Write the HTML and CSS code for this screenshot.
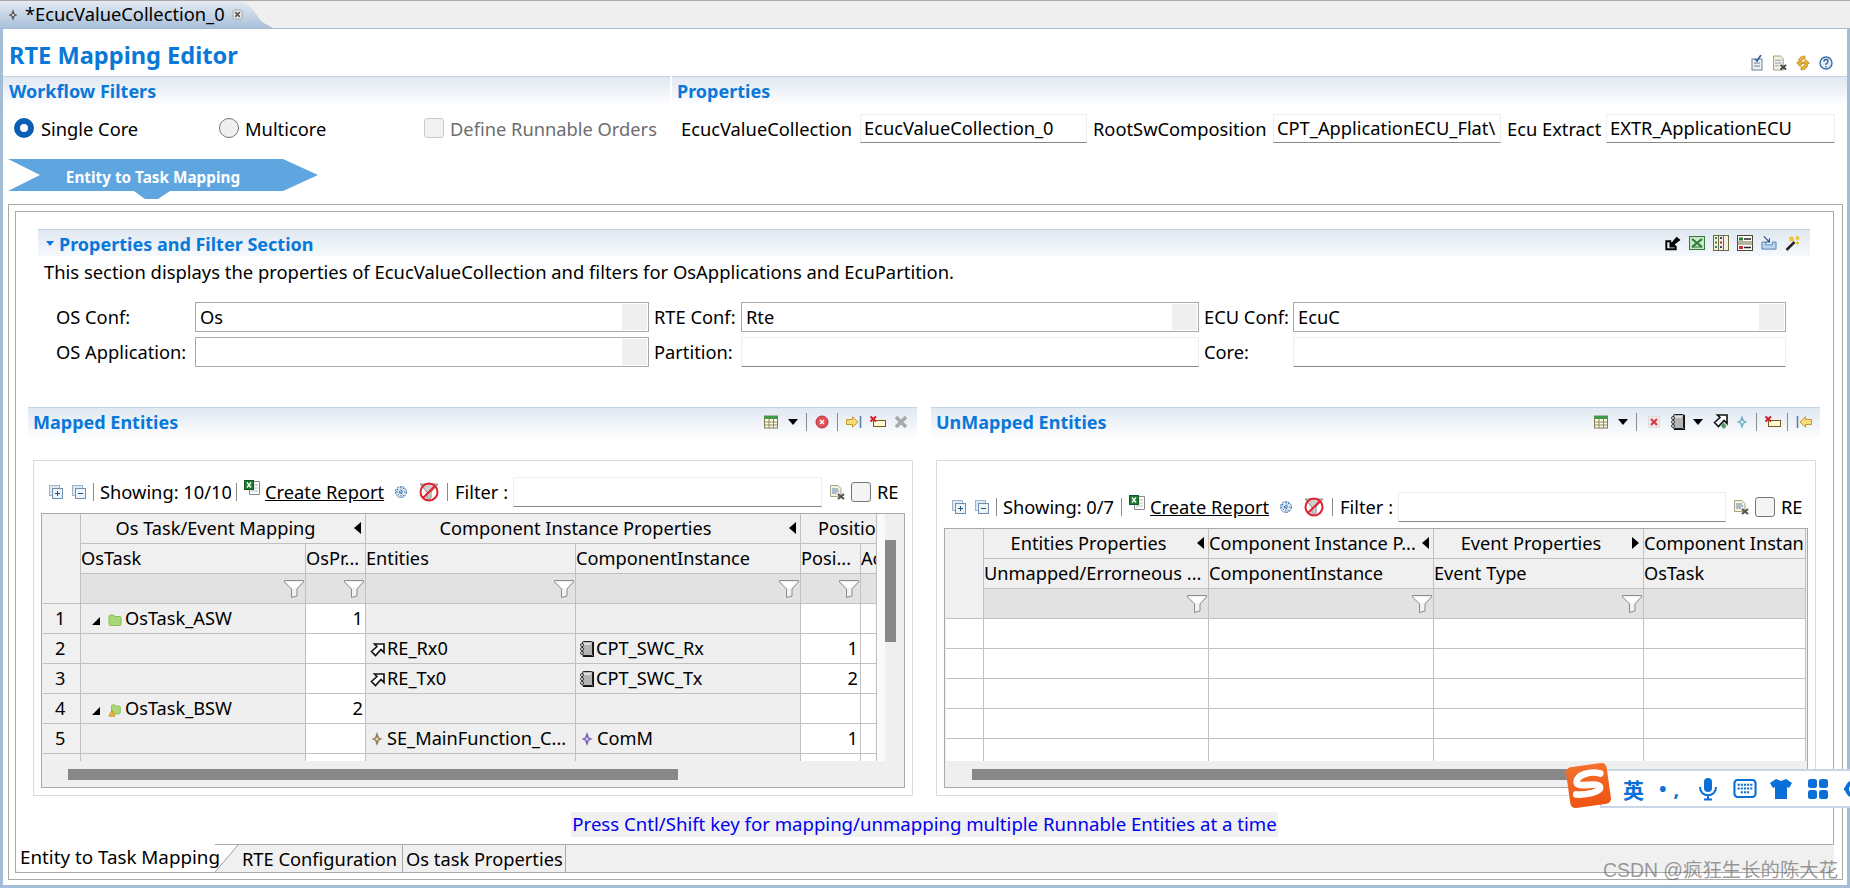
FILE: index.html
```html
<!DOCTYPE html>
<html lang="en">
<head>
<meta charset="utf-8">
<title>RTE Mapping Editor</title>
<link rel="stylesheet" href="styles.css">
</head>
<body>
<svg class="defs" width="0" height="0" aria-hidden="true">
  <defs>
    <symbol id="i-funnel" viewBox="0 0 20 18"><path d="M.5.5H19.500V2L13 9V16L7.500 17.500V9L.5 2Z" fill="#f2f2f2" stroke="#8a8a8a"/><path d="M3 2.500H17L12 8H8Z" fill="#fff"/></symbol>
    <symbol id="i-grid" viewBox="0 0 14 13"><rect x=".5" y=".5" width="13" height="12" fill="#fffbe8" stroke="#7d7d50"/><rect x=".5" y=".5" width="13" height="3" fill="#3f9a45"/><path d="M.5 6.500H13.500M.5 9.500H13.500M5 3.500V12.500M9.500 3.500V12.500" stroke="#8a8a60"/></symbol>
    <symbol id="i-plus" viewBox="0 0 14 14"><rect x=".5" y=".5" width="10" height="10" fill="#dfe9f3" stroke="#9db5cc"/><rect x="3.500" y="3.500" width="10" height="10" fill="#eef3f8" stroke="#6f8fb0"/><path d="M6 8.500H11M8.500 6V11" stroke="#24507c"/></symbol>
    <symbol id="i-minus" viewBox="0 0 14 14"><rect x=".5" y=".5" width="10" height="10" fill="#dfe9f3" stroke="#9db5cc"/><rect x="3.500" y="3.500" width="10" height="10" fill="#eef3f8" stroke="#6f8fb0"/><path d="M6 8.500H11" stroke="#24507c"/></symbol>
    <symbol id="i-excel" viewBox="0 0 16 16"><path d="M5.500 1.500H15.500V14.500H5.500Z" fill="#fff" stroke="#8a8a8a"/><path d="M7 5H14M7 8H14M7 11H14" stroke="#b8b8b8"/><rect x=".5" y=".5" width="9" height="9" fill="#1f7a32" stroke="#0f5a20"/><path d="M3 2.500L7 7.500M7 2.500L3 7.500" stroke="#fff" stroke-width="1.300"/></symbol>
    <symbol id="i-globe" viewBox="0 0 12 12"><circle cx="6" cy="6" r="5.500" fill="#dbe7f3" stroke="#3b74ad" stroke-dasharray="2 1"/><path d="M2 3L9 10M9 2L3 9M1 6H11M6 1V11" stroke="#2f6aa5" stroke-dasharray="1.500 1.200"/></symbol>
    <symbol id="i-nofilter" viewBox="0 0 20 20"><path d="M1 2H19L12 10V16L8 18V10Z" fill="#cfcfcf" stroke="#8a8a8a"/><circle cx="10" cy="10" r="8.500" fill="none" stroke="#e2202c" stroke-width="2"/><path d="M4 16L16 4" stroke="#e2202c" stroke-width="2"/></symbol>
    <symbol id="i-clear" viewBox="0 0 15 15"><path d="M.5.5H8L11 3.500V11.500H.5Z" fill="#f6f2dc" stroke="#a9a283"/><path d="M2 4H8M2 6H9M2 8H7" stroke="#5e82b8"/><path d="M8 9L14 14M14 9L8 14" stroke="#555" stroke-width="2.200"/></symbol>
    <symbol id="i-folder" viewBox="0 0 14 14"><path d="M1 3.500Q1 2 2.500 2H5.500L7 3.500H12Q13 3.500 13 5V11Q13 12.500 11.500 12.500H2.500Q1 12.500 1 11Z" fill="#a8d977" stroke="#8dbb5a"/></symbol>
    <symbol id="i-folder-warn" viewBox="0 0 14 16"><path d="M3 3.500Q3 2 4.500 2H6.500L8 3.500H12Q13 3.500 13 5V11Q13 12.500 11.500 12.500H4.500Q3 12.500 3 11Z" fill="#a8d977" stroke="#8dbb5a"/><path d="M3.500 8L7 15H0Z" fill="#f2b632" stroke="#b57d10" stroke-width=".7"/></symbol>
    <symbol id="i-run" viewBox="0 0 15 14"><path d="M14 1V9.500L11 6.500L5.500 12.500L1.500 8.500L7 3.500L4.500 1Z" fill="#fff" stroke="#111" stroke-width="1.600" stroke-linejoin="miter"/></symbol>
    <symbol id="i-book" viewBox="0 0 14 16"><rect x="2.500" y=".5" width="10" height="14" rx="1" fill="#b4b4b4" stroke="#222"/><path d="M12.500 1.500H13.500V15.500H3.500V14.500" fill="none" stroke="#111" stroke-width="1.400"/><rect x="4" y="2" width="7" height="2" fill="#ddd"/><circle cx="2" cy="4" r="1.500" fill="#eee" stroke="#111" stroke-width=".8"/><circle cx="2" cy="8" r="1.500" fill="#eee" stroke="#111" stroke-width=".8"/><circle cx="2" cy="12" r="1.500" fill="#eee" stroke="#111" stroke-width=".8"/></symbol>
    <symbol id="i-star" viewBox="0 0 12 16"><path d="M6 1L8 6.500L11.500 8L8 9.500L6 15L4 9.500L.5 8L4 6.500Z" fill="currentColor"/><circle cx="6" cy="8" r="1.600" fill="#fff" fill-opacity=".7"/></symbol>
    <symbol id="i-tag" viewBox="0 0 16 12"><rect x="3.500" y="4.500" width="12" height="6" fill="#fff8d8" stroke="#7a5a12"/><path d="M.5 .5L6 5.500M6 .5L.5 5.500" stroke="#d2202c" stroke-width="2"/></symbol>
    <symbol id="i-next" viewBox="0 0 16 12"><path d="M.5 3.500H6.500V.8L12 6L6.500 11.200V8.500H.5Z" fill="#f6dc7a" stroke="#c49a24"/><path d="M14.500 0V12" stroke="#5a7fb4" stroke-width="1.600"/></symbol>
    <symbol id="i-prev" viewBox="0 0 16 12"><path d="M15.500 3.500H9.500V.8L4 6L9.500 11.200V8.500H15.500Z" fill="#f6dc7a" stroke="#c49a24"/><path d="M1.500 0V12" stroke="#5a7fb4" stroke-width="1.600"/></symbol>
  </defs>
</svg>
<div class="app">
  <div class="tabbar">
    <div class="etab">
      <svg class="i10" viewBox="0 0 12 16"><use href="#i-star"/></svg>
      <span class="etab-t">*EcucValueCollection_0</span>
      <svg class="i12" viewBox="0 0 12 12"><rect x="1" y="1" width="10" height="10" rx="2" fill="#e8e8e8" stroke="#a5a5a5"/><path d="M3.500 3.500L8.500 8.500M8.500 3.500L3.500 8.500" stroke="#555" stroke-width="1.800"/></svg>
    </div>
  </div>
  <div class="editor">
    <div class="titlerow">
      <h1 class="title">RTE Mapping Editor</h1>
      <div class="title-icons">
        <svg class="ti" viewBox="0 0 12 16"><rect x="1" y="4" width="10" height="11" fill="#eef3f8" stroke="#6c7f93"/><path d="M3 8H9M3 11H9" stroke="#6c7f93"/><path d="M4 4L6 6L10 0" fill="none" stroke="#2360a8" stroke-width="1.600"/></svg>
        <svg class="ti" viewBox="0 0 15 16"><path d="M.5.5H8L11 3.500V15.500H.5Z" fill="#f4f1e2" stroke="#9c9a86"/><path d="M2 5H9M2 8H9M2 11H6" stroke="#8896ab"/><path d="M8 10L14 15M14 10L8 15" stroke="#444" stroke-width="2"/></svg>
        <svg class="ti" viewBox="0 0 14 16"><path d="M9 1C4 1 2 4 2.500 7.500L.5 7.500L4 11.500L7.500 7.500H5.500C5 5.500 6.500 4 9 4Z" fill="#e6b32e" stroke="#a87c14" stroke-width=".6"/><path d="M5 15C10 15 12 12 11.500 8.500L13.500 8.500L10 4.500L6.500 8.500H8.500C9 10.500 7.500 12 5 12Z" fill="#e6b32e" stroke="#a87c14" stroke-width=".6"/></svg>
        <svg class="ti" viewBox="0 0 14 16"><circle cx="7" cy="8" r="6" fill="#e2edf7" stroke="#3a6ea5" stroke-width="1.400"/><path d="M5 6.500Q5 4.500 7 4.500Q9 4.500 9 6.500Q9 7.800 7 8.800V10M7 11V12.500" fill="none" stroke="#2b5c94" stroke-width="1.300"/></svg>
      </div>
    </div>
    <div class="toprow">
      <section class="wf">
        <h2 class="sechead">Workflow Filters</h2>
        <div class="wf-row">
          <label class="opt opt-single"><span class="radio on"></span>Single Core</label>
          <label class="opt opt-multi"><span class="radio"></span>Multicore</label>
          <label class="opt opt-disabled"><span class="check dis"></span>Define Runnable Orders</label>
        </div>
      </section>
      <section class="props">
        <h2 class="sechead">Properties</h2>
        <div class="props-row">
          <span class="pl pl1">EcucValueCollection</span><span class="field f1">EcucValueCollection_0</span>
          <span class="pl pl2">RootSwComposition</span><span class="field f2">CPT_ApplicationECU_Flat\</span>
          <span class="pl pl3">Ecu Extract</span><span class="field f3">EXTR_ApplicationECU</span>
        </div>
      </section>
    </div>
    <div class="crumb"><span>Entity to Task Mapping</span></div>
    <div class="outer">
      <div class="inner">
        <section class="pf">
          <div class="pf-head">
            <span class="twist"></span><h2 class="pf-title">Properties and Filter Section</h2>
            <div class="pf-icons">
              <svg class="t16" viewBox="0 0 18 16"><path d="M7 6H1.500V15H12V11" fill="none" stroke="#000" stroke-width="2.200"/><path d="M5 13V5L7.500 7.500L13 1L17.500 4.500L11 9.500L13 13Z" fill="#000"/></svg>
              <svg class="t16" viewBox="0 0 16 16"><rect x=".5" y="1.500" width="15" height="13" fill="#cfe3c8" stroke="#2e7d3b"/><path d="M3 4L13 12M13 4L3 12" stroke="#1f7a32" stroke-width="2"/><path d="M3 12H13" stroke="#1f7a32"/></svg>
              <svg class="t16" viewBox="0 0 16 16"><rect x=".5" y=".5" width="15" height="15" fill="#f2efdc" stroke="#6b6b45"/><path d="M5.500 0V16M10.500 0V16" stroke="#6b6b45"/><path d="M2 3H4M2 7.500H4M2 12H4" stroke="#3b8a3f" stroke-width="2"/><path d="M7 3H9M7 12H9" stroke="#3a3a9e" stroke-width="2"/><path d="M7 7.500H9" stroke="#d2202c" stroke-width="2"/></svg>
              <svg class="t16" viewBox="0 0 16 16"><rect x=".5" y=".5" width="15" height="15" fill="#fff" stroke="#47472c"/><path d="M0 7H16M0 9H16" stroke="#6b6b45"/><rect x="2" y="2.500" width="4" height="3" fill="#2a7a30"/><rect x="2" y="11" width="4" height="3" fill="#d2302c"/><path d="M7 4H14M7 12.500H14" stroke="#222" stroke-width="1.500"/></svg>
              <svg class="t16" viewBox="0 0 17 16"><path d="M1 7V14.500H16V7H12V10H5V7Z" fill="#bcd6ef" stroke="#4b7fb5"/><path d="M3 1L9 7M9 3V7H5" fill="none" stroke="#234e86" stroke-width="1.200"/></svg>
              <svg class="t16" viewBox="0 0 15 16"><path d="M1 15L9 7" stroke="#222" stroke-width="2.500"/><circle cx="6" cy="4" r="2.500" fill="#f0c92c"/><circle cx="12" cy="3" r="2" fill="#f0c92c"/><circle cx="12" cy="8" r="1.500" fill="#e8b824"/></svg>
            </div>
          </div>
          <p class="pf-desc">This section displays the properties of EcucValueCollection and filters for OsApplications and EcuPartition.</p>
        </section>
        <div class="form">
          <span class="fl">OS Conf:</span><span class="box box-b">Os<i class="btn"></i></span>
          <span class="fl fl2">RTE Conf:</span><span class="box box-b">Rte<i class="btn"></i></span>
          <span class="fl fl2">ECU Conf:</span><span class="box box-b">EcuC<i class="btn"></i></span>
          <span class="fl">OS Application:</span><span class="box box-b"><i class="btn"></i></span>
          <span class="fl fl2">Partition:</span><span class="box box-e"></span>
          <span class="fl fl2">Core:</span><span class="box box-e"></span>
        </div>
        <div class="panels">
          <section class="pane">
            <div class="pane-head">
              <h2 class="pane-title">Mapped Entities</h2>
              <div class="pane-icons">
                <svg class="t14"><use href="#i-grid"/></svg><i class="caret"></i><i class="sep"></i>
                <svg class="t14" viewBox="0 0 14 14"><circle cx="7" cy="7" r="6" fill="#e25058" stroke="#b62f37"/><path d="M5 5L9 9M9 5L5 9" stroke="#fff" stroke-width="1.500"/></svg><i class="sep"></i>
                <svg class="t16w"><use href="#i-next"/></svg>
                <svg class="t16w"><use href="#i-tag"/></svg>
                <svg class="t14" viewBox="0 0 14 14"><path d="M2 2L12 12M12 2L2 12" stroke="#a9a9a9" stroke-width="3.600"/></svg>
              </div>
            </div>
            <div class="box-panel">
              <div class="tools">
                <svg class="t14"><use href="#i-plus"/></svg>
                <svg class="t14"><use href="#i-minus"/></svg>
                <i class="sep"></i>
                <span class="showing show-l">Showing: 10/10</span>
                <i class="sep"></i>
                <svg class="t16 up"><use href="#i-excel"/></svg>
                <a class="report">Create Report</a>
                <svg class="t12"><use href="#i-globe"/></svg>
                <svg class="t20"><use href="#i-nofilter"/></svg>
                <i class="sep"></i>
                <span class="flt">Filter :</span>
                <span class="finput fi-l"></span>
                <svg class="t15"><use href="#i-clear"/></svg>
                <span class="check"></span>
                <span class="re">RE</span>
              </div>
              <div class="grid grid-l">
                <div class="grid-main">
                  <div class="clip">
                    <table class="tbl tbl-l">
                      <colgroup><col class="c-rh"><col class="c225"><col class="c60"><col class="c210"><col class="c225"><col class="c60"><col class="c16"></colgroup>
                      <tr class="h"><th class="rh" rowspan="3"></th><th colspan="2"><div class="gh"><span>Os Task/Event Mapping</span><i class="tl"></i></div></th><th colspan="2"><div class="gh"><span>Component Instance Properties</span><i class="tl"></i></div></th><th colspan="2"><div class="gh ghclip">Position</div></th></tr>
                      <tr class="h"><th class="l">OsTask</th><th class="l">OsPr...</th><th class="l">Entities</th><th class="l">ComponentInstance</th><th class="l">Posi...</th><th class="l">Ac</th></tr>
                      <tr class="fr"><td class="fc"><svg class="fun"><use href="#i-funnel"/></svg></td><td class="fc"><svg class="fun"><use href="#i-funnel"/></svg></td><td class="fc"><svg class="fun"><use href="#i-funnel"/></svg></td><td class="fc"><svg class="fun"><use href="#i-funnel"/></svg></td><td class="fc"><svg class="fun"><use href="#i-funnel"/></svg></td><td class="fc"></td></tr>
                      <tr><th class="rh n">1</th><td class="g task"><i class="tw"></i><svg class="t14"><use href="#i-folder"/></svg>OsTask_ASW</td><td class="r">1</td><td class="g"></td><td class="g"></td><td></td><td></td></tr>
                      <tr><th class="rh n">2</th><td class="g"></td><td></td><td class="g ent"><svg class="t16w2"><use href="#i-run"/></svg>RE_Rx0</td><td class="g ent"><svg class="t15b"><use href="#i-book"/></svg>CPT_SWC_Rx</td><td class="r">1</td><td></td></tr>
                      <tr><th class="rh n">3</th><td class="g"></td><td></td><td class="g ent"><svg class="t16w2"><use href="#i-run"/></svg>RE_Tx0</td><td class="g ent"><svg class="t15b"><use href="#i-book"/></svg>CPT_SWC_Tx</td><td class="r">2</td><td></td></tr>
                      <tr><th class="rh n">4</th><td class="g task"><i class="tw"></i><svg class="t14"><use href="#i-folder-warn"/></svg>OsTask_BSW</td><td class="r">2</td><td class="g"></td><td class="g"></td><td></td><td></td></tr>
                      <tr><th class="rh n">5</th><td class="g"></td><td></td><td class="g ent"><svg class="ts brown"><use href="#i-star"/></svg>SE_MainFunction_C...</td><td class="g ent"><svg class="ts purple"><use href="#i-star"/></svg>ComM</td><td class="r">1</td><td></td></tr>
                      <tr><th class="rh"></th><td class="g"></td><td></td><td class="g"></td><td class="g"></td><td></td><td></td></tr>
                    </table>
                  </div>
                  <div class="vscroll"><i class="vthumb"></i></div>
                </div>
                <div class="hscroll"><i class="hthumb hthumb-l"></i></div>
              </div>
            </div>
          </section>
          <section class="pane pane-r">
            <div class="pane-head">
              <h2 class="pane-title">UnMapped Entities</h2>
              <div class="pane-icons">
                <svg class="t14"><use href="#i-grid"/></svg><i class="caret"></i><i class="sep"></i>
                <svg class="t12 xs" viewBox="0 0 12 12"><rect x=".5" y=".5" width="11" height="11" fill="#f3e9e9" stroke="#ddd"/><path d="M3 3L9 9M9 3L3 9" stroke="#d8384a" stroke-width="2.200"/></svg>
                <svg class="t15b"><use href="#i-book"/></svg><i class="caret"></i>
                <svg class="t16 runx" viewBox="0 0 16 16"><path d="M15 1V9.500L12 6.500L6.500 12.500L2.500 8.500L8 3.500L5.500 1Z" fill="#fff" stroke="#111" stroke-width="1.600"/><path d="M11 8L14.500 12L12 15L9 12Z" fill="#4f9a6a"/></svg>
                <svg class="t12 teal" viewBox="0 0 12 16"><use href="#i-star"/></svg><i class="sep"></i>
                <svg class="t16w"><use href="#i-tag"/></svg><i class="sep sep-t"></i>
                <svg class="t16w"><use href="#i-prev"/></svg>
              </div>
            </div>
            <div class="box-panel">
              <div class="tools">
                <svg class="t14"><use href="#i-plus"/></svg>
                <svg class="t14"><use href="#i-minus"/></svg>
                <i class="sep"></i>
                <span class="showing show-r">Showing: 0/7</span>
                <i class="sep"></i>
                <svg class="t16 up"><use href="#i-excel"/></svg>
                <a class="report">Create Report</a>
                <svg class="t12"><use href="#i-globe"/></svg>
                <svg class="t20"><use href="#i-nofilter"/></svg>
                <i class="sep"></i>
                <span class="flt">Filter :</span>
                <span class="finput fi-r"></span>
                <svg class="t15"><use href="#i-clear"/></svg>
                <span class="check"></span>
                <span class="re">RE</span>
              </div>
              <div class="grid grid-r">
                <div class="grid-main">
                  <div class="clip">
                    <table class="tbl tbl-r">
                      <colgroup><col class="c-rh"><col class="c225"><col class="c225"><col class="c210"><col class="c162"></colgroup>
                      <tr class="h"><th class="rh" rowspan="3"></th><th><div class="gh"><span>Entities Properties</span><i class="tl"></i></div></th><th><div class="gh gh-l"><span>Component Instance P...</span><i class="tl"></i></div></th><th><div class="gh"><span>Event Properties</span><i class="tr"></i></div></th><th><div class="gh ghclip gh0">Component Instance</div></th></tr>
                      <tr class="h"><th class="l">Unmapped/Errorneous ...</th><th class="l">ComponentInstance</th><th class="l">Event Type</th><th class="l">OsTask</th></tr>
                      <tr class="fr"><td class="fc"><svg class="fun"><use href="#i-funnel"/></svg></td><td class="fc"><svg class="fun"><use href="#i-funnel"/></svg></td><td class="fc"><svg class="fun"><use href="#i-funnel"/></svg></td><td class="fc"></td></tr>
                      <tr><th class="rh w"></th><td></td><td></td><td></td><td></td></tr>
                      <tr><th class="rh w"></th><td></td><td></td><td></td><td></td></tr>
                      <tr><th class="rh w"></th><td></td><td></td><td></td><td></td></tr>
                      <tr><th class="rh w"></th><td></td><td></td><td></td><td></td></tr>
                      <tr><th class="rh w"></th><td></td><td></td><td></td><td></td></tr>
                    </table>
                  </div>
                </div>
                <div class="hscroll"><i class="hthumb hthumb-r"></i></div>
              </div>
            </div>
          </section>
        </div>
        <div class="msgrow"><span class="msg">Press Cntl/Shift key for mapping/unmapping multiple Runnable Entities at a time</span></div>
      </div>
      <div class="ptabs">
        <span class="ptab active">Entity to Task Mapping</span><i class="slant"></i>
        <span class="ptab p2">RTE Configuration</span>
        <span class="ptab p3">Os task Properties</span>
      </div>
    </div>
  </div>
</div>
<div class="ime">
  <div class="ime-logo"><svg viewBox="0 0 40 40"><path d="M33 10C24 6 10 8 9 15C8 22 30 17 31 23C31 28 17 29 7 27" fill="none" stroke="#fff" stroke-width="6.500" stroke-linecap="round"/></svg></div>
  <div class="ime-bar">
    <b class="ime-y">英</b>
    <span class="ime-p">•,</span>
    <svg class="ime-i" viewBox="0 0 18 22"><rect x="5" y="0" width="8" height="14" rx="4" fill="#0a6fd6"/><path d="M1 9C1 20 17 20 17 9M9 18V21M5 21.500H13" fill="none" stroke="#0a6fd6" stroke-width="2"/></svg>
    <svg class="ime-k" viewBox="0 0 22 18"><rect x="1" y="1" width="20" height="16" rx="3" fill="none" stroke="#0a6fd6" stroke-width="2"/><path d="M4 5.500H18M4 9H18M7 12.500H15" stroke="#0a6fd6" stroke-width="2" stroke-dasharray="2 1"/></svg>
    <svg class="ime-i2" viewBox="0 0 22 20"><path d="M6 0L11 2L16 0L22 4L19 9L17 8V20H5V8L3 9L0 4Z" fill="#0a6fd6"/></svg>
    <svg class="ime-i2" viewBox="0 0 20 20"><rect x="0" y="0" width="9" height="9" rx="2.500" fill="#0a6fd6"/><rect x="11" y="0" width="9" height="9" rx="2.500" fill="#0a6fd6"/><rect x="0" y="11" width="9" height="9" rx="2.500" fill="#0a6fd6"/><rect x="11" y="11" width="9" height="9" rx="2.500" fill="#0a6fd6"/></svg>
    <svg class="ime-i3" viewBox="0 0 20 20"><circle cx="10" cy="10" r="7" fill="none" stroke="#0a6fd6" stroke-width="4"/><path d="M10 0V4M10 16V20M0 10H4M16 10H20" stroke="#0a6fd6" stroke-width="3"/></svg>
  </div>
</div>
<div class="wm">CSDN @疯狂生长的陈大花</div>
</body>
</html>
```
FILE: styles.css
```css
* { box-sizing: border-box; }
html, body { margin: 0; padding: 0; }
body {
  width: 1850px; height: 888px; overflow: hidden; position: relative;
  font-family: "Noto Sans", "Open Sans", sans-serif; font-size: 18.3px; color: #000; background: #fff;
}
h1, h2, p { margin: 0; }
i { display: block; font-style: normal; }
svg { display: block; flex: none; }
.defs { position: absolute; }

.app { height: 888px; display: flex; flex-direction: column; border: solid #a5bcd6; border-width: 0 3px 3px 3px; }

.tabbar { height: 29px; flex: none; background: #efefef; border-top: 1px solid #a9a9a9; border-bottom: 1px solid #a9bad0; margin: 0 -3px; }
.etab {
  width: 273px; height: 27px; display: flex; align-items: center; padding-left: 8px;
  background: linear-gradient(#e4ebf3, #a9c0da);
  clip-path: polygon(0 0, 240px 0, 250px 5px, 262px 21px, 273px 27px, 0 27px);
}
.etab-t { margin-left: 7px; white-space: nowrap; width: 207px; line-height: 24px; padding-bottom: 2px; }
.i10 { width: 10px; height: 14px; color: #555; }
.i12 { width: 11px; height: 11px; }

.editor { flex: 1; display: flex; flex-direction: column; min-height: 0; }
.titlerow { height: 47px; flex: none; display: flex; justify-content: space-between; align-items: flex-start; padding: 11px 0 0 6px; }
.title { font-size: 23.6px; line-height: 30px; font-weight: 700; color: #0a78d8; }
.title-icons { display: flex; gap: 9px; margin: 15px 14px 0 0; }
.ti { width: 14px; height: 16px; }

.toprow { display: flex; gap: 2px; height: 83px; flex: none; }
.wf { width: 667px; }
.props { flex: 1; }
.sechead {
  height: 30px; font-size: 18px; line-height: 28px; font-weight: 700; color: #0a78d8; padding-left: 6px;
  background: linear-gradient(#e0e8f2, #fff); border-top: 1px solid #c4d3e3;
}
.props .sechead { padding-left: 5px; }
.wf-row { display: flex; align-items: center; height: 47px; padding-bottom: 3px; }
.opt { display: flex; align-items: center; gap: 7px; white-space: nowrap; }
.opt-single { margin-left: 11px; width: 205px; }
.opt-multi { width: 205px; gap: 6px; }
.opt-disabled { color: #6d6d6d; gap: 6px; }
.radio { width: 20px; height: 20px; border-radius: 50%; border: 1px solid #777; background: #f0f0f0; flex: none; }
.radio.on { border: 6px solid #0a5fb4; background: #fff; }
.check { display: block; flex: none; width: 20px; height: 20px; border: 1px solid #777; border-radius: 3px; background: #f4f4f4; }
.check.dis { border-color: #c8c8c8; background: #f2f2f2; }
.props-row { display: flex; align-items: center; height: 47px; margin-left: 9px; padding-bottom: 2px; }
.pl { white-space: nowrap; }
.pl1 { width: 179px; }
.pl2 { width: 180px; margin-left: 6px; }
.pl3 { width: 99px; margin-left: 6px; }
.field {
  height: 29px; line-height: 26px; padding-left: 3px; background: #fff; overflow: hidden; white-space: nowrap;
  border: 1px solid #eee; border-bottom: 1px solid #888; width: 227px;
}
.f2 { width: 228px; }
.f3 { width: 229px; }

.crumb {
  width: 310px; height: 40px; margin-left: 5px; flex: none; background: #5fa5e0; color: #fff;
  font-size: 15.3px; font-weight: 700; text-align: center; line-height: 36px; padding-right: 20px;
  clip-path: polygon(0 0, 275px 0, 310px 16px, 275px 32px, 162px 32px, 150px 40px, 137px 40px, 126px 32px, 0 32px, 32px 16px);
}

.outer {
  margin: 5px 4px 5px 5px; flex: 1; min-height: 0; border: 1px solid #a9a9a9; padding: 6px 8px 6px 6px;
  display: flex; flex-direction: column;
}
.inner { flex: 1; min-height: 0; border: 1px solid #a9a9a9; border-bottom: 0; }

.pf { margin: 17px 23px 0 22px; }
.pf-head {
  height: 27px; display: flex; align-items: center; background: linear-gradient(#e0e8f2, #f6f9fc);
  border-top: 1px solid #c4d3e3; padding-left: 8px;
}
.twist { width: 0; height: 0; border: 4px solid transparent; border-top: 5px solid #0a78d8; border-bottom: 0; margin-right: 5px; }
.pf-title { font-size: 18px; line-height: 28px; padding-top: 2px; font-weight: 700; color: #0a78d8; }
.pf-icons { margin-left: auto; display: flex; gap: 8px; padding-right: 9px; }
.t16 { width: 16px; height: 16px; }
.pf-desc { line-height: 30px; margin-left: 6px; height: 46px; padding-top: 1px; font-size: 18.4px; white-space: nowrap; }

.form {
  display: grid; grid-template-columns: 139px 454px 92px 458px 94px 493px; grid-auto-rows: 30px; row-gap: 5px;
  margin-left: 40px; height: 105px;
}
.fl { line-height: 30px; white-space: nowrap; }
.fl2 { padding-left: 5px; }
.box { position: relative; line-height: 28px; padding-left: 4px; }
.box-b { border: 1px solid #a9a9a9; }
.box-e { border: 1px solid #eee; border-bottom: 1px solid #888; }
.btn { position: absolute; right: 1px; top: 1px; bottom: 1px; width: 25px; background: #efefef; }

.panels { display: flex; gap: 14px; margin-left: 12px; }
.pane { width: 889px; }
.pane-head {
  height: 33px; display: flex; align-items: center; background: linear-gradient(#e0e8f2, #fff);
  border-top: 1px solid #c4d3e3; padding-left: 5px;
}
.pane-title { font-size: 18px; font-weight: 700; color: #0a78d8; padding-bottom: 4px; }
.pane-icons { margin-left: auto; display: flex; align-items: center; gap: 8px; padding: 0 9px 4px 0; }
.pane-r .pane-icons { padding-right: 8px; }
.t14 + .caret { margin-left: 2px; }
.sep-t { margin-left: -2px; }
.xs { margin: 0 3px; }
.runx { margin-left: 1px; }
.t14 { width: 14px; height: 14px; }
.t16w { width: 16px; height: 12px; }
.t12 { width: 12px; height: 12px; }
.t15 { width: 15px; height: 15px; }
.t15b { width: 14px; height: 16px; }
.t20 { width: 20px; height: 20px; }
.t16w2 { width: 15px; height: 14px; }
.ts { width: 12px; height: 16px; }
.teal { color: #6fb4c4; height: 16px; }
.brown { color: #9a7a5a; }
.purple { color: #7a62b8; }
.up { margin-top: -8px; }
.caret { width: 0; height: 0; border: 5.500px solid transparent; border-top: 6px solid #000; border-bottom: 0; }
.sep { width: 1px; height: 18px; background: #8a8a8a; flex: none; }

.box-panel {
  margin: 20px 4px 0 5px; height: 336px; border: 1px solid #dcdcdc; padding: 0 7px 7px;
  display: flex; flex-direction: column; justify-content: flex-end;
}
.tools { display: flex; align-items: center; height: 32px; flex: none; margin-bottom: 5px; }
.tools .t14 { margin-left: 8px; }
.tools .t14 + .t14 { margin-left: 9px; }
.tools .sep { margin-left: 7px; }
.tools .showing + .sep { margin-left: 5px; }
.showing { margin-left: 6px; white-space: nowrap; overflow: hidden; padding-bottom: 2px; }
.show-l { width: 131px; }
.show-r { width: 113px; }
.tools .up { margin-left: 7px; }
.report { margin-left: 5px; text-decoration: underline; white-space: nowrap; width: 120px; padding-bottom: 2px; }
.tools .t12 { margin-left: 10px; }
.tools .t20 { margin-left: 12px; }
.tools .t20 + .sep { margin-left: 8px; }
.flt { margin-left: 7px; width: 58px; white-space: nowrap; padding-bottom: 2px; }
.finput { height: 30px; background: #fff; border: 1px solid #eee; border-bottom: 1px solid #888; flex: none; }
.fi-l { width: 309px; }
.fi-r { width: 328px; }
.tools .t15 { margin-left: 8px; }
.tools .check { margin-left: 6px; }
.re { margin-left: 6px; padding-bottom: 2px; }

.grid { display: flex; flex-direction: column; border: 1px solid #a9a9a9; padding: 0 1px; background: #efefef; flex: none; width: 864px; }
.grid-l { height: 275px; }
.grid-r { height: 260px; }
.grid-main { flex: 1; min-height: 0; display: flex; }
.clip { flex: 1; overflow: hidden; min-width: 0; background: #fff; }
.vscroll { width: 26px; flex: none; background: #efefef; border-left: 8px solid #fafafa; padding-top: 26px; }
.vthumb { height: 102px; background: #888; width: 11px; }
.hscroll { height: 26px; flex: none; padding-top: 8px; }
.hthumb { height: 11px; background: #888; }
.hthumb-l { width: 610px; margin-left: 25px; }
.hthumb-r { width: 620px; margin-left: 26px; }

.tbl { table-layout: fixed; border-collapse: separate; border-spacing: 0; font-size: 18.2px; }
.tbl-l { width: 834px; }
.tbl-r { width: 860px; }
.c-rh { width: 38px; }
.c225 { width: 225px; }
.c60 { width: 60px; }
.c210 { width: 210px; }
.c16 { width: 16px; }
.c162 { width: 162px; }
.tbl th, .tbl td { height: 30px; padding: 0 1px 2px 0; border-right: 1px solid #c0c0c0; border-bottom: 1px solid #c0c0c0; font-weight: 400; white-space: nowrap; overflow: hidden; background: #fff; }
.tbl tr.h th { background: #f0f0f0; }
.tbl .rh { background: #f0f0f0; }
.tbl .rh.w { background: #fff; }
.tbl .rh.n { text-align: left; padding-left: 12px; }
.tbl .l { text-align: left; }
.tbl td.fc { background: #e2e2e2; padding: 0; }
.fun { width: 20px; height: 18px; margin-left: auto; margin-right: 1px; }
.tbl td.g { background: #efefef; }
.tbl td.r { text-align: right; padding-right: 2px; }
.gh { display: flex; align-items: center; }
.gh span { flex: 1; text-align: center; overflow: hidden; padding-right: 4px; }
.gh-l span { text-align: left; padding-right: 0; }
.ghclip { padding-left: 17px; overflow: hidden; }
.gh0 { padding-left: 0; }
.tl { width: 0; height: 0; flex: none; margin-right: 3px; border: 6px solid transparent; border-left: 0; border-right: 7px solid #000; }
.tr { width: 0; height: 0; flex: none; margin-right: 3px; border: 6px solid transparent; border-right: 0; border-left: 7px solid #000; }
.tbl td.task { padding-left: 11px; }
.tbl td.ent { padding-left: 4px; }
.tw { display: inline-block; width: 0; height: 0; border-left: 8px solid transparent; border-bottom: 8px solid #000; margin-right: 8px; }
.tbl svg.t14, .tbl svg.t16w2, .tbl svg.t15b, .tbl svg.ts { display: inline-block; vertical-align: -2px; margin-right: 2px; }
.tbl svg.t14 { margin-right: 3px; }
.tbl svg.ts { margin: 0 4px 0 1px; }

.msgrow { text-align: center; margin-top: 16px; }
.msg { display: inline-block; height: 25px; line-height: 23px; background: #f0f0f0; color: #0000f0; padding: 0 1px; white-space: nowrap; font-size: 18.6px; vertical-align: top; }

.ptabs { display: flex; height: 29px; flex: none; background: #f0f0f0; border: 1px solid #a9a9a9; border-width: 1px 0 1px 1px; }
.ptab { line-height: 27px; white-space: nowrap; display: block; }
.active { position: relative; z-index: 1; background: #fff; width: 199px; padding-left: 4px; margin-top: -1px; height: 28px; border-bottom-left-radius: 4px; font-size: 18.8px; }
.slant { width: 23px; height: 27px; flex: none; background: linear-gradient(to bottom right, #fff calc(50% - .7px), #999 50%, #f0f0f0 calc(50% + .7px)); }
.p2 { width: 165px; padding-left: 4px; border-right: 1px solid #a9a9a9; }
.p3 { width: 163px; padding-left: 3px; border-right: 1px solid #a9a9a9; }

.ime { position: absolute; left: 1566px; top: 763px; width: 284px; height: 46px; }
.ime-logo { position: absolute; left: 2px; top: 2px; width: 41px; height: 41px; background: linear-gradient(#f4702c, #ef5412); border-radius: 5px; transform: rotate(-8deg); z-index: 1; }
.ime-logo svg { width: 41px; height: 41px; }
.ime-bar {
  position: absolute; left: 34px; right: 0; top: 6px; height: 39px; background: #fff; border: 2px solid #c8d6e6; border-right: 0;
  display: flex; align-items: center; color: #0a6fd6; padding-left: 21px; overflow: hidden;
}
.ime-y { font-size: 21px; font-family: "Noto Sans CJK SC", sans-serif; width: 22px; line-height: 30px; }
.ime-p { margin-left: 15px; width: 26px; font-weight: 700; font-size: 20px; line-height: 24px; letter-spacing: 7px; white-space: nowrap; }
.ime-i { width: 18px; height: 24px; margin-left: 14px; }
.ime-k { width: 24px; height: 19px; margin-left: 16px; }
.ime-i2 { width: 22px; height: 20px; margin-left: 13px; }
.ime-i2 + .ime-i2 { margin-left: 16px; width: 20px; }
.ime-i3 { width: 20px; height: 20px; margin-left: 16px; }

.wm { position: absolute; left: 1603px; top: 859px; font-family: "Liberation Sans", "Noto Sans CJK SC", sans-serif; font-size: 19.4px; color: rgba(90, 90, 90, .6); white-space: nowrap; line-height: 22px; }
```
